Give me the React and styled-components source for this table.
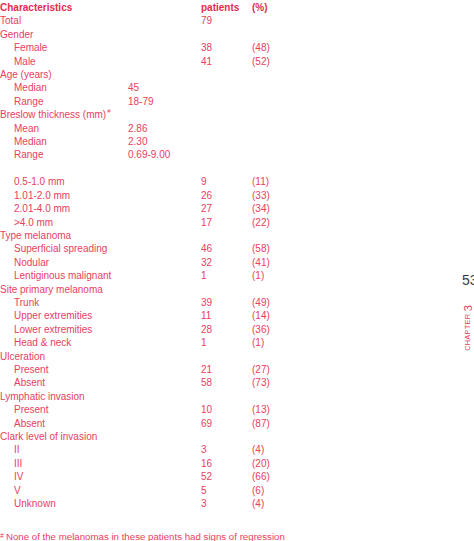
import styled, { createGlobalStyle } from 'styled-components';

const GlobalStyle = createGlobalStyle`
  html, body {
    margin: 0;
    padding: 0;
    background: #ffffff;
  }
  body {
    font-family: "Liberation Sans", Arial, sans-serif;
    color: #e8405e;
  }
`;

const Page = styled.div`
  display: flex;
  width: 474px;
  height: 541px;
  overflow: hidden;
`;

const Table = styled.div`
  flex: 1;
  padding-top: 1px;
  font-size: 10px;
  line-height: 13.42px;
`;

const Row = styled.div`
  display: grid;
  grid-template-columns: 128px 73px 51px 1fr;
  height: 13.42px;
  white-space: nowrap;
  font-weight: ${({ head }) => (head ? 700 : 400)};
  color: ${({ head }) => (head ? '#e42b50' : '#e8405e')};
`;

const Label = styled.span`
  padding-left: ${({ sub }) => (sub ? '14px' : '0')};
`;

const Sup = styled.sup`
  font-size: 6px;
  line-height: 0;
  vertical-align: 5px;
  margin-left: 1px;
`;

const Footnote = styled.div`
  margin-top: 19px;
  font-size: 9.7px;
  line-height: 13.4px;
  white-space: nowrap;
`;

const Hash = styled.span`
  font-size: 7px;
  vertical-align: 2px;
  margin-right: 2px;
`;

const Aside = styled.div`
  width: 12px;
  padding-top: 272px;
  display: flex;
  flex-direction: column;
  align-items: flex-start;
`;

const PageNum = styled.div`
  font-size: 14px;
  line-height: 16px;
  color: #3a3a3a;
  white-space: nowrap;
`;

const Chapter = styled.div`
  margin-top: 17px;
  writing-mode: vertical-rl;
  transform: rotate(180deg);
  font-size: 7.5px;
  letter-spacing: 0.2px;
  color: #e8405e;
  white-space: nowrap;
  span {
    font-size: 11px;
  }
`;

const rows = [
  { label: 'Characteristics', n: 'patients', p: '(%)', head: true },
  { label: 'Total', n: '79' },
  { label: 'Gender' },
  { label: 'Female', sub: true, n: '38', p: '(48)' },
  { label: 'Male', sub: true, n: '41', p: '(52)' },
  { label: 'Age (years)' },
  { label: 'Median', sub: true, v: '45' },
  { label: 'Range', sub: true, v: '18-79' },
  { label: 'Breslow thickness (mm)', sup: '#' },
  { label: 'Mean', sub: true, v: '2.86' },
  { label: 'Median', sub: true, v: '2.30' },
  { label: 'Range', sub: true, v: '0.69-9.00' },
  { label: '' },
  { label: '0.5-1.0 mm', sub: true, n: '9', p: '(11)' },
  { label: '1.01-2.0 mm', sub: true, n: '26', p: '(33)' },
  { label: '2.01-4.0 mm', sub: true, n: '27', p: '(34)' },
  { label: '>4.0 mm', sub: true, n: '17', p: '(22)' },
  { label: 'Type melanoma' },
  { label: 'Superficial spreading', sub: true, n: '46', p: '(58)' },
  { label: 'Nodular', sub: true, n: '32', p: '(41)' },
  { label: 'Lentiginous malignant', sub: true, n: '1', p: '(1)' },
  { label: 'Site primary melanoma' },
  { label: 'Trunk', sub: true, n: '39', p: '(49)' },
  { label: 'Upper extremities', sub: true, n: '11', p: '(14)' },
  { label: 'Lower extremities', sub: true, n: '28', p: '(36)' },
  { label: 'Head & neck', sub: true, n: '1', p: '(1)' },
  { label: 'Ulceration' },
  { label: 'Present', sub: true, n: '21', p: '(27)' },
  { label: 'Absent', sub: true, n: '58', p: '(73)' },
  { label: 'Lymphatic invasion' },
  { label: 'Present', sub: true, n: '10', p: '(13)' },
  { label: 'Absent', sub: true, n: '69', p: '(87)' },
  { label: 'Clark level of invasion' },
  { label: 'II', sub: true, n: '3', p: '(4)' },
  { label: 'III', sub: true, n: '16', p: '(20)' },
  { label: 'IV', sub: true, n: '52', p: '(66)' },
  { label: 'V', sub: true, n: '5', p: '(6)' },
  { label: 'Unknown', sub: true, n: '3', p: '(4)' },
];

export default function App() {
  return (
    <>
      <GlobalStyle />
      <Page>
        <Table>
          {rows.map((r, i) => (
            <Row key={i} head={r.head}>
              <Label sub={r.sub}>
                {r.label}
                {r.sup && <Sup>{r.sup}</Sup>}
              </Label>
              <span>{r.v}</span>
              <span>{r.n}</span>
              <span>{r.p}</span>
            </Row>
          ))}
          <Footnote>
            <Hash>#</Hash>None of the melanomas in these patients had signs of regression
          </Footnote>
        </Table>
        <Aside>
          <PageNum>53</PageNum>
          <Chapter>
            CHAPTER <span>3</span>
          </Chapter>
        </Aside>
      </Page>
    </>
  );
}
